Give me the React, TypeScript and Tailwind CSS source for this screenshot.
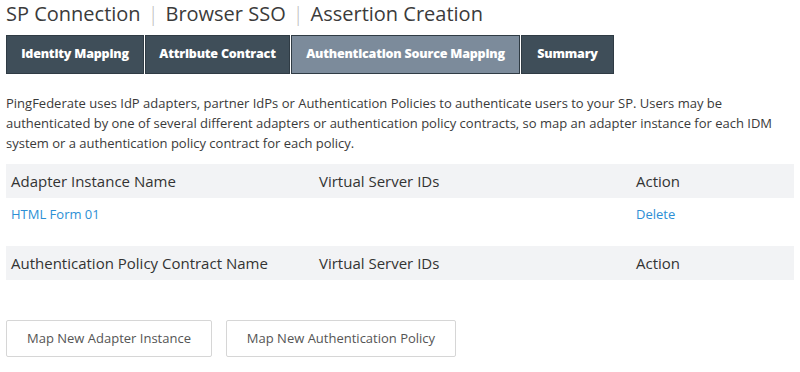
import React from "react";

const tabs = [
  { label: "Identity Mapping", w: "w-[138px]", active: false },
  { label: "Attribute Contract", w: "w-[145px]", active: false },
  { label: "Authentication Source Mapping", w: "w-[229px]", active: true },
  { label: "Summary", w: "w-[93px]", active: false },
];

export default function App() {
  return (
    <div className="w-[800px] h-[372px] bg-white text-[#333] font-['Open_Sans',sans-serif] overflow-hidden">
      {/* ---------- BREADCRUMB TITLE ---------- */}
      <h1 className="pl-[6px] pt-0 h-[28px] flex items-center text-[20px] leading-[24px] text-[#3b3b3b]">
        <span>SP Connection</span>
        <span className="mx-[7px] text-[#bbb] font-light">|</span>
        <span>Browser SSO</span>
        <span className="mx-[7px] text-[#bbb] font-light">|</span>
        <span>Assertion Creation</span>
      </h1>

      {/* ---------- TABS ---------- */}
      <div className="mt-[7px] ml-[6px] flex gap-[1px]">
        {tabs.map((t) => (
          <div
            key={t.label}
            className={`${t.w} h-[39px] flex items-center justify-center text-[12.5px] font-extrabold text-white tracking-[-0.2px] border border-[#2f3b44] ${
              t.active ? "bg-[#7c8b9b]" : "bg-[#3f4e59]"
            }`}
          >
            {t.label}
          </div>
        ))}
      </div>

      {/* ---------- DESCRIPTION ---------- */}
      <p className="mt-[19px] px-[6px] text-[13px] leading-[20px] text-[#3a3a3a] w-[790px]">
        PingFederate uses IdP adapters, partner IdPs or Authentication Policies to authenticate users to your SP. Users may be
        authenticated by one of several different adapters or authentication policy contracts, so map an adapter instance for each IDM
        system or a authentication policy contract for each policy.
      </p>

      {/* ---------- ADAPTER TABLE ---------- */}
      <div className="mt-[11px] mx-[6px]">
        <div className="grid grid-cols-[313px_317px_1fr] h-[34px] items-center bg-[#f2f3f5] text-[15px] text-[#333]">
          <span className="pl-[5px]">Adapter Instance Name</span>
          <span>Virtual Server IDs</span>
          <span>Action</span>
        </div>
        <div className="grid grid-cols-[313px_317px_1fr] h-[34px] items-center text-[13px] text-[#2d8fd5]">
          <span className="pl-[5px]">HTML Form 01</span>
          <span></span>
          <span>Delete</span>
        </div>

        <div className="mt-[14px] grid grid-cols-[313px_317px_1fr] h-[34px] items-center bg-[#f2f3f5] text-[15px] text-[#333]">
          <span className="pl-[5px]">Authentication Policy Contract Name</span>
          <span>Virtual Server IDs</span>
          <span>Action</span>
        </div>
      </div>

      {/* ---------- BUTTONS ---------- */}
      <div className="mt-[40px] ml-[6px] flex gap-[14px]">
        <button className="w-[206px] h-[37px] border border-[#d6d6d6] rounded-[2px] bg-white text-[13px] text-[#555]">
          Map New Adapter Instance
        </button>
        <button className="w-[230px] h-[37px] border border-[#d6d6d6] rounded-[2px] bg-white text-[13px] text-[#555]">
          Map New Authentication Policy
        </button>
      </div>
    </div>
  );
}
